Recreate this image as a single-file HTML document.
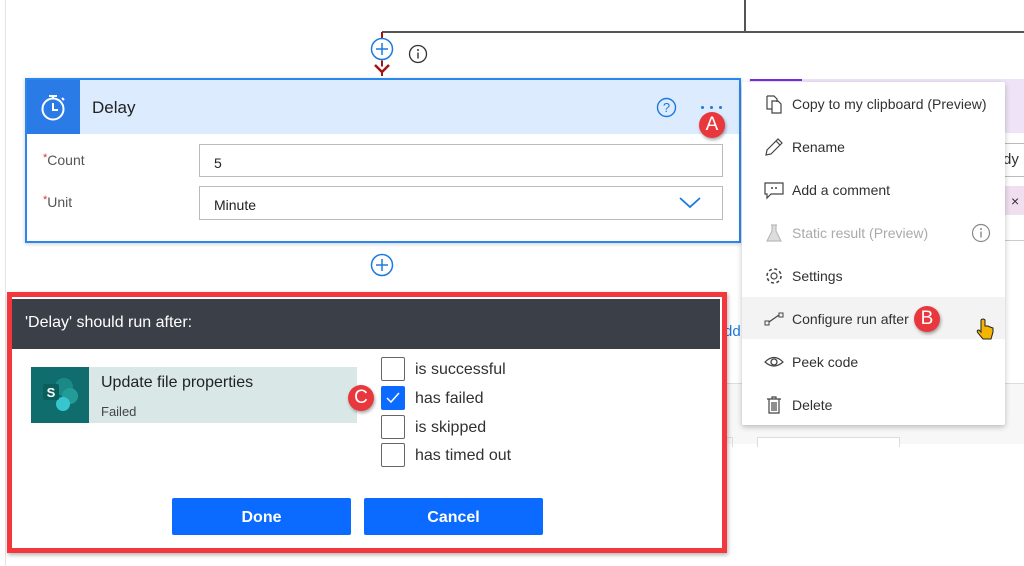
<!DOCTYPE html>
<html><head><meta charset="utf-8"><style>
*{margin:0;padding:0;box-sizing:border-box}
body{width:1024px;height:566px;position:relative;overflow:hidden;background:#fff;font-family:"Liberation Sans",sans-serif;color:#323130}
.a{position:absolute}
.badge{position:absolute;width:26px;height:26px;border-radius:50%;background:#e8383d;color:#fff;font-size:19px;line-height:26px;text-align:center;box-shadow:1px 2px 3px rgba(0,0,0,.35)}
.mi{position:absolute;left:742px;width:263px;height:43px;font-size:14px;color:#323130;line-height:44px;padding-left:50px}
.mi svg{position:absolute;left:22px;top:12px}
.cb{position:absolute;left:381px;width:24px;height:24px;border:1px solid #666;border-radius:2px;background:#fff}
.cl{position:absolute;left:415px;font-size:16px;color:#323130}
.btn{position:absolute;top:498px;height:37px;width:179px;background:#0b6aff;color:#fff;font-size:16px;font-weight:bold;text-align:center;line-height:39px;border-radius:2px}
</style></head><body>
<div class="a" style="left:5px;top:0;width:1px;height:566px;background:#e4e4e4"></div>
<div class="a" style="left:382px;top:31px;width:642px;height:2px;background:#555"></div>
<div class="a" style="left:744px;top:0;width:2px;height:32px;background:#555"></div>
<div class="a" style="left:381px;top:32px;width:0;height:44px;border-left:2px dashed #a31515"></div>
<svg class="a" style="left:370px;top:37px" width="26" height="44"><circle cx="12" cy="12" r="10.5" fill="#fff" stroke="#1b7ae0" stroke-width="1.5"/><path d="M12 6v12M6 12h12" stroke="#1b7ae0" stroke-width="1.5"/><path d="M5 28l7 7 7-7" fill="none" stroke="#a31515" stroke-width="2.5"/></svg>
<svg class="a" style="left:408px;top:44px" width="20" height="20"><circle cx="10" cy="10" r="8.5" fill="none" stroke="#333" stroke-width="1.3"/><path d="M10 8.5v6" stroke="#333" stroke-width="1.4"/><circle cx="10" cy="6" r="1" fill="#333"/></svg>
<div class="a" style="left:749px;top:79px;width:275px;height:54px;background:#efe4f7"></div>
<div class="a" style="left:750px;top:79px;width:52px;height:2px;background:#7b2fd6"></div>
<div class="a" style="left:990px;top:143px;width:34px;height:34px;border:1px solid #bbb;border-right:none"></div>
<div class="a" style="left:1003px;top:151px;font-size:15px">dy</div>
<div class="a" style="left:990px;top:186px;width:34px;height:29px;background:#efdff0"></div>
<div class="a" style="left:1011px;top:193px;font-size:14px">×</div>
<div class="a" style="left:990px;top:240px;width:34px;height:1px;background:#ccc"></div>
<div class="a" style="left:727px;top:383px;width:297px;height:61px;background:#f7f7f7;border-top:1px solid #ddd"></div>
<div class="a" style="left:757px;top:437px;width:143px;height:10px;border:1px solid #ddd;border-bottom:none;background:#fff"></div>
<div class="a" style="left:718px;top:437px;width:15px;height:10px;border:1px solid #ddd;border-bottom:none"></div>
<div class="a" style="left:724px;top:323px;color:#1b7ae0;font-size:15px">dd</div>
<div class="a" style="left:25px;top:78px;width:716px;height:165px;border:2px solid #2b87ee;background:#fff;box-shadow:0 1px 4px rgba(0,0,0,.2)"></div>
<div class="a" style="left:27px;top:80px;width:712px;height:54px;background:#dcebfd"></div>
<div class="a" style="left:27px;top:80px;width:53px;height:54px;background:#2b7be7"></div>
<svg class="a" style="left:39px;top:92px" width="28" height="30"><circle cx="14" cy="17" r="10.5" fill="none" stroke="#fff" stroke-width="2"/><path d="M10 4h8M14 4v2M14 11v7h5M23 6l2 2" stroke="#fff" stroke-width="2" fill="none"/></svg>
<div class="a" style="left:92px;top:98px;font-size:17px;color:#222">Delay</div>
<svg class="a" style="left:656px;top:97px" width="21" height="21"><circle cx="10.5" cy="10.5" r="9" fill="none" stroke="#1b7ae0" stroke-width="1.4"/><text x="10.5" y="15" font-size="13" text-anchor="middle" fill="#1b7ae0" font-family="Liberation Sans">?</text></svg>
<div class="a" style="left:701px;top:106px;width:3px;height:3px;background:#1b7ae0;border-radius:50%;box-shadow:9px 0 #1b7ae0,18px 0 #1b7ae0"></div>
<div class="badge" style="left:699px;top:112px">A</div>
<div class="a" style="left:43px;top:152px;font-size:14px;color:#555"><span style="color:#d33;font-size:11px;vertical-align:top">*</span>Count</div>
<div class="a" style="left:43px;top:194px;font-size:14px;color:#555"><span style="color:#d33;font-size:11px;vertical-align:top">*</span>Unit</div>
<div class="a" style="left:199px;top:144px;width:524px;height:33px;border:1px solid #bbb;font-size:14px;padding:10px 14px;color:#222">5</div>
<div class="a" style="left:199px;top:186px;width:524px;height:34px;border:1px solid #bbb;font-size:14px;padding:10px 14px;color:#222">Minute</div>
<svg class="a" style="left:678px;top:195px" width="24" height="16"><path d="M2 3l10 9 10-9" fill="none" stroke="#1b7ae0" stroke-width="1.8"/></svg>
<svg class="a" style="left:370px;top:253px" width="26" height="26"><circle cx="12" cy="12" r="10.5" fill="#fff" stroke="#1b7ae0" stroke-width="1.5"/><path d="M12 6v12M6 12h12" stroke="#1b7ae0" stroke-width="1.5"/></svg>
<div class="a" style="left:742px;top:82px;width:263px;height:343px;background:#fff;box-shadow:0 2px 6px rgba(0,0,0,.25);border-radius:2px"></div>
<div class="a" style="left:742px;top:297px;width:263px;height:42px;background:#f3f3f3"></div>
<div class="mi" style="top:82px"><svg width="20" height="20"><path d="M3 2h7l3 3v3M3 2v13h5M8 7h6l3 3v9H8z" fill="none" stroke="#444" stroke-width="1.2"/></svg>Copy to my clipboard (Preview)</div>
<div class="mi" style="top:125px"><svg width="20" height="20"><path d="M2 18l1-5L14 2l4 4L7 17z M12 4l4 4" fill="none" stroke="#444" stroke-width="1.2"/></svg>Rename</div>
<div class="mi" style="top:168px"><svg width="20" height="20"><path d="M1 3h18v11H7l-4 4v-4H1z" fill="none" stroke="#444" stroke-width="1.2"/><path d="M8 7v2M12 7v2" stroke="#444" stroke-width="1.5"/></svg>Add a comment</div>
<div class="mi" style="top:211px;color:#aaa"><svg width="20" height="20"><path d="M7 2h6M8 2v6L3 18h14L12 8V2" fill="#ddd" stroke="#bbb" stroke-width="1.2"/></svg>Static result (Preview)<svg style="left:229px;top:12px" width="20" height="20"><circle cx="10" cy="10" r="8.5" fill="none" stroke="#888" stroke-width="1.2"/><path d="M10 8.5v6" stroke="#888" stroke-width="1.4"/><circle cx="10" cy="6" r="1" fill="#888"/></svg></div>
<div class="mi" style="top:254px"><svg width="20" height="20"><circle cx="10" cy="10" r="3" fill="none" stroke="#444" stroke-width="1.2"/><circle cx="10" cy="10" r="7" fill="none" stroke="#444" stroke-width="1.6" stroke-dasharray="3 2.5"/></svg>Settings</div>
<div class="mi" style="top:297px"><svg width="20" height="20"><rect x="1" y="12" width="4" height="4" fill="none" stroke="#444"/><rect x="15" y="4" width="4" height="4" fill="none" stroke="#444"/><path d="M5 13l10-7" stroke="#444" stroke-width="1.2"/></svg>Configure run after</div>
<div class="mi" style="top:340px"><svg width="20" height="20"><path d="M1 10q9-9 18 0q-9 8-18 0z" fill="none" stroke="#444" stroke-width="1.2"/><circle cx="10" cy="10" r="3" fill="none" stroke="#444" stroke-width="1.3"/></svg>Peek code</div>
<div class="mi" style="top:383px"><svg width="20" height="20"><path d="M3 4h14M8 4V2h4v2M5 4v14h10V4M8 7v9M10 7v9M12 7v9" fill="none" stroke="#444" stroke-width="1.2"/></svg>Delete</div>
<div class="badge" style="left:914px;top:306px">B</div>
<svg class="a" style="left:975px;top:318px" width="20" height="24"><path d="M6 2v12l-2-2q-3 0-1 3l5 6h8l2-7v-4l-3-1-2-1-3 0V2q-2-2-4 0z" fill="#f4b400" stroke="#222" stroke-width="1"/></svg>
<div class="a" style="left:7px;top:292px;width:720px;height:261px;border:5px solid #f2383c;background:#fff;box-shadow:1px 2px 4px rgba(0,0,0,.3)"></div>
<div class="a" style="left:12px;top:299px;width:708px;height:50px;background:#3b4048"></div>
<div class="a" style="left:25px;top:314px;font-size:16px;color:#fff">'Delay' should run after:</div>
<div class="a" style="left:31px;top:367px;width:326px;height:56px;background:#d9e8e7"></div>
<div class="a" style="left:31px;top:367px;width:58px;height:56px;background:#0f6e6d"></div>
<svg class="a" style="left:38px;top:374px" width="44" height="44"><circle cx="26" cy="13" r="9" fill="#1b8a87"/><circle cx="32" cy="22" r="8" fill="#239c98"/><circle cx="25" cy="30" r="7" fill="#37c6d0"/><rect x="5" y="10" width="16" height="16" rx="2" fill="#0a5f5c"/><text x="13" y="23" font-size="13" font-weight="bold" fill="#fff" text-anchor="middle" font-family="Liberation Sans">S</text></svg>
<div class="a" style="left:101px;top:374px;font-size:16px;color:#222">Update file properties</div>
<div class="a" style="left:101px;top:404px;font-size:13px;color:#444">Failed</div>
<div class="cb" style="top:357px"></div>
<div class="cb" style="top:386px;background:#0b6aff;border-color:#0b6aff"><svg width="22" height="22"><path d="M5 11l4 4 8-9" fill="none" stroke="#fff" stroke-width="1.5"/></svg></div>
<div class="cb" style="top:415px"></div>
<div class="cb" style="top:443px"></div>
<div class="cl" style="top:361px">is successful</div>
<div class="cl" style="top:390px">has failed</div>
<div class="cl" style="top:419px">is skipped</div>
<div class="cl" style="top:447px">has timed out</div>
<div class="badge" style="left:348px;top:385px">C</div>
<div class="btn" style="left:172px">Done</div>
<div class="btn" style="left:364px">Cancel</div>
</body></html>
